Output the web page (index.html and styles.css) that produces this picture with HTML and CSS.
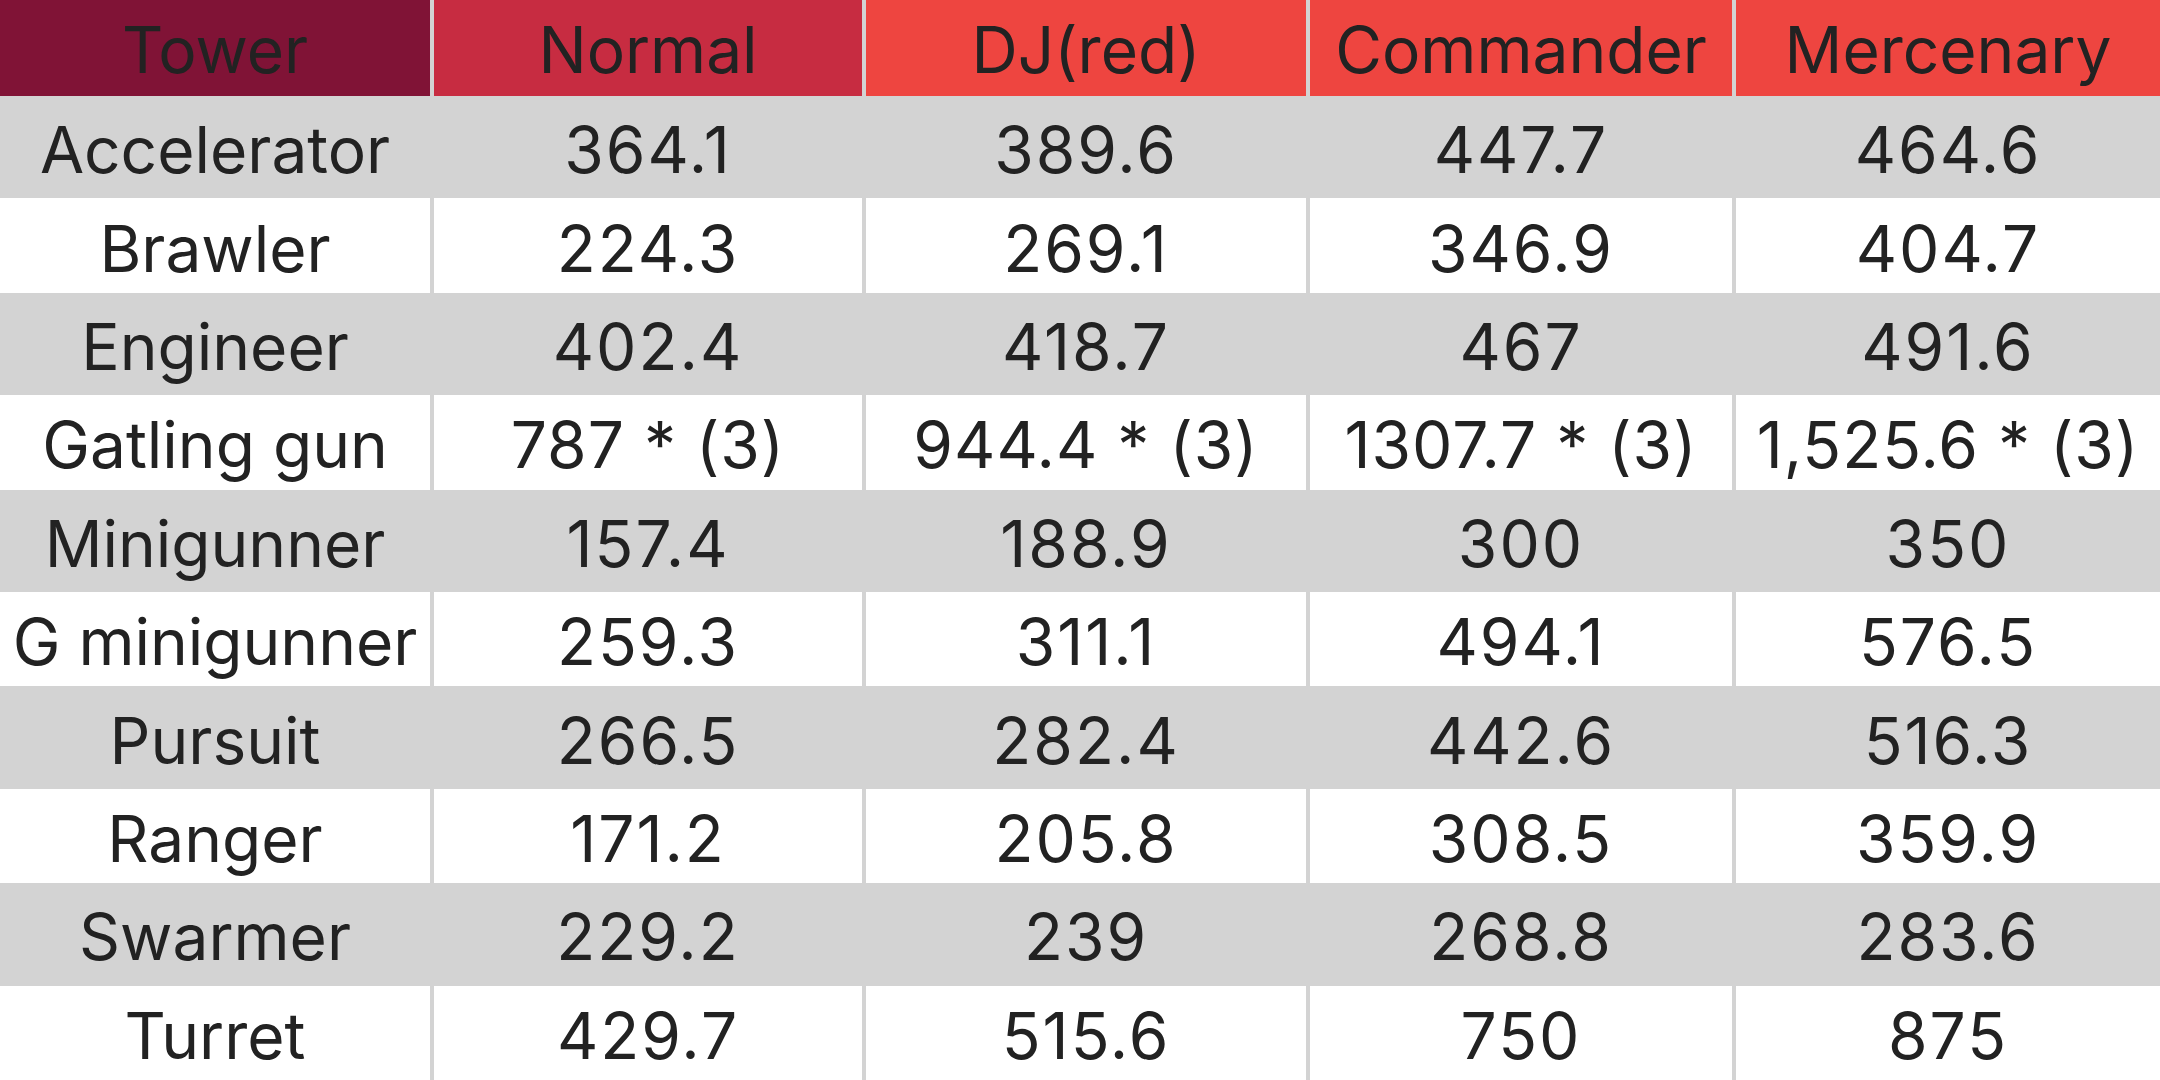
FILE: index.html
```html
<!DOCTYPE html>
<html>
<head>
<meta charset="utf-8">
<link rel="stylesheet" href="styles.css">
</head>
<body>
<div class="table">
  <div class="cell head h1">Tower</div>
  <div class="cell head h2">Normal</div>
  <div class="cell head h3">DJ(red)</div>
  <div class="cell head h3">Commander</div>
  <div class="cell head h3">Mercenary</div>

  <div class="cell gray">Accelerator</div>
  <div class="cell gray num">364.1</div>
  <div class="cell gray num">389.6</div>
  <div class="cell gray num">447.7</div>
  <div class="cell gray num">464.6</div>

  <div class="cell">Brawler</div>
  <div class="cell num">224.3</div>
  <div class="cell num">269.1</div>
  <div class="cell num">346.9</div>
  <div class="cell num">404.7</div>

  <div class="cell gray">Engineer</div>
  <div class="cell gray num">402.4</div>
  <div class="cell gray num">418.7</div>
  <div class="cell gray num">467</div>
  <div class="cell gray num">491.6</div>

  <div class="cell">Gatling gun</div>
  <div class="cell num multi">787 * (3)</div>
  <div class="cell num multi">944.4 * (3)</div>
  <div class="cell num multi">1307.7 * (3)</div>
  <div class="cell num multi">1,525.6 * (3)</div>

  <div class="cell gray">Minigunner</div>
  <div class="cell gray num">157.4</div>
  <div class="cell gray num">188.9</div>
  <div class="cell gray num">300</div>
  <div class="cell gray num">350</div>

  <div class="cell">G minigunner</div>
  <div class="cell num">259.3</div>
  <div class="cell num">311.1</div>
  <div class="cell num">494.1</div>
  <div class="cell num">576.5</div>

  <div class="cell gray">Pursuit</div>
  <div class="cell gray num">266.5</div>
  <div class="cell gray num">282.4</div>
  <div class="cell gray num">442.6</div>
  <div class="cell gray num">516.3</div>

  <div class="cell">Ranger</div>
  <div class="cell num">171.2</div>
  <div class="cell num">205.8</div>
  <div class="cell num">308.5</div>
  <div class="cell num">359.9</div>

  <div class="cell gray">Swarmer</div>
  <div class="cell gray num">229.2</div>
  <div class="cell gray num">239</div>
  <div class="cell gray num">268.8</div>
  <div class="cell gray num">283.6</div>

  <div class="cell">Turret</div>
  <div class="cell num">429.7</div>
  <div class="cell num">515.6</div>
  <div class="cell num">750</div>
  <div class="cell num">875</div>
</div>
</body>
</html>
```

FILE: styles.css
```css
html, body {
  margin: 0;
  padding: 0;
  background: #ffffff;
}

.table {
  display: grid;
  grid-template-columns: 430px 428px 440px 422px 424px;
  grid-template-rows: 96px repeat(10, 1fr);
  gap: 4px;
  width: 2160px;
  height: 1080px;
  background: #d3d3d3;
  font-family: "Inter", "Liberation Sans", sans-serif;
  font-size: 64px;
  color: #222222;
}

.cell {
  display: flex;
  align-items: center;
  justify-content: center;
  padding-top: 6px;
  box-sizing: border-box;
  background: #ffffff;
  white-space: nowrap;
  line-height: 1;
}

.num {
  letter-spacing: 2px;
}

.num.multi {
  letter-spacing: 1px;
}

.gray {
  background: #d3d3d3;
}

.head {
  padding-top: 4px;
}

.h1 { background: #801336; }
.h2 { background: #c72c41; }
.h3 { background: #ee4540; }
```
